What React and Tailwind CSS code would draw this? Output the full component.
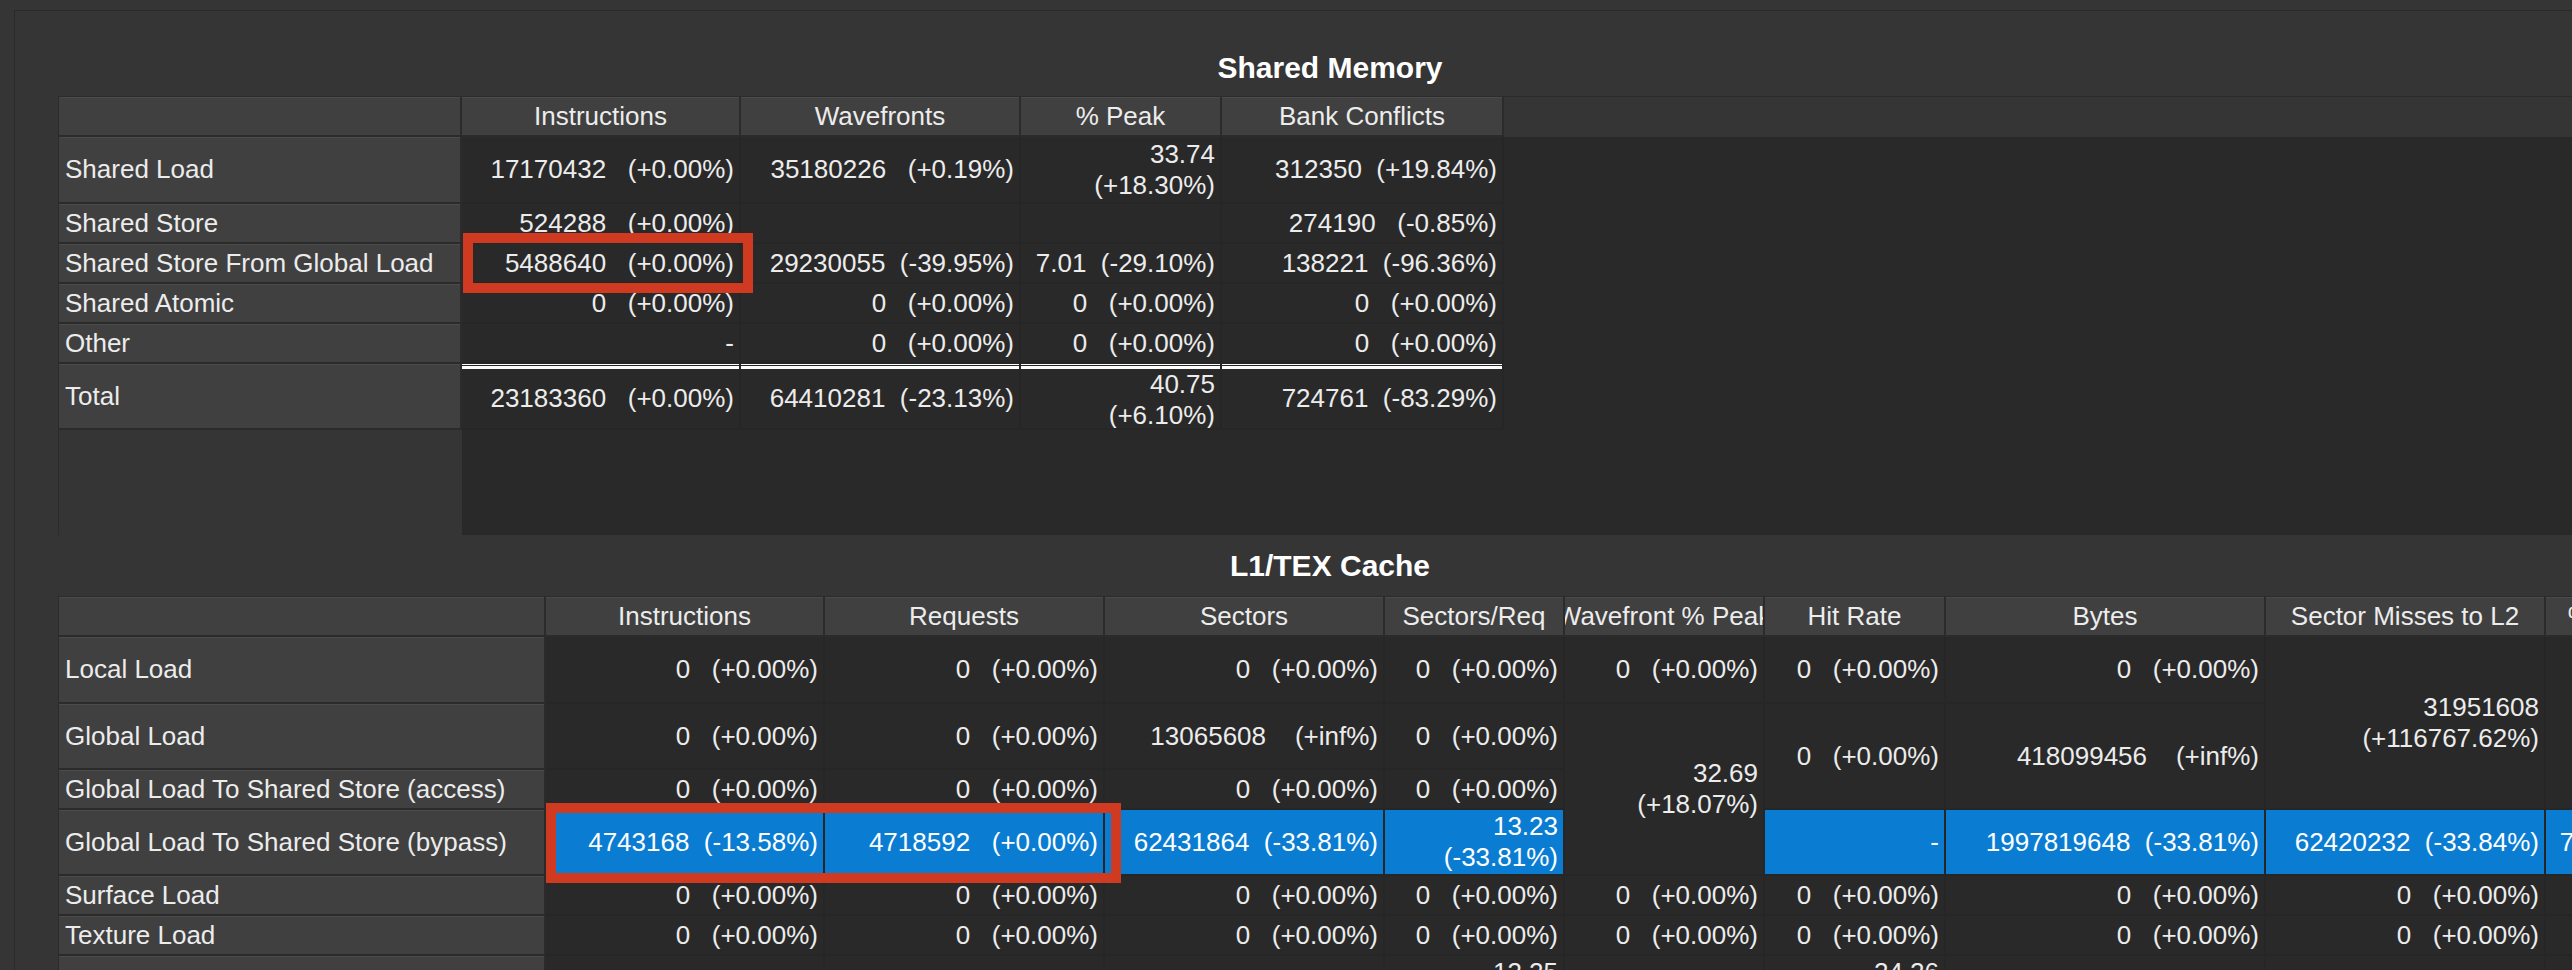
import React from 'react';

const v = (n, p) => `${n}  ${p.padStart(9, ' ')}`;
const z = v('0', '(+0.00%)');

function HCell({ children, cls = '', left = false }) {
  return (
    <div
      className={`shrink-0 flex items-center overflow-hidden whitespace-nowrap bg-[#404040] shadow-[inset_0_1px_0_#4b4b4b] border-r-2 border-b-2 border-[#2b2b2b] text-[#ececec] ${
        left ? 'justify-start pl-[6px]' : 'justify-center'
      } ${cls}`}
    >
      {children}
    </div>
  );
}

function DCell({ c, blue = false, total = false, span = '' }) {
  const lines = c == null ? [] : Array.isArray(c) ? c : [c];
  return (
    <div
      className={`flex flex-col min-w-0 overflow-hidden border-r-2 border-b-2 border-[#262626] ${
        blue ? 'bg-[#0a7dd3] text-white' : 'text-[#ececec]'
      } ${span}`}
    >
      {total && <div className="h-[5px] shrink-0 border-t border-b-[3px] border-white" />}
      <div className="flex-1 flex flex-col items-end justify-center pr-[5px] leading-[31px]">
        {lines.map((l, i) => (
          <span key={i} className="whitespace-pre">
            {l}
          </span>
        ))}
      </div>
    </div>
  );
}

const SHARED_COLS = [
  ['Instructions', 'w-[279px]'],
  ['Wavefronts', 'w-[280px]'],
  ['% Peak', 'w-[201px]'],
  ['Bank Conflicts', 'w-[282px]'],
];

const SHARED_ROWS = [
  ['Shared Load', 'h-[67px]', [v('17170432', '(+0.00%)'), v('35180226', '(+0.19%)'), ['33.74', '(+18.30%)'], v('312350', '(+19.84%)')]],
  ['Shared Store', 'h-[40px]', [v('524288', '(+0.00%)'), null, null, v('274190', '(-0.85%)')]],
  ['Shared Store From Global Load', 'h-[40px]', [v('5488640', '(+0.00%)'), v('29230055', '(-39.95%)'), v('7.01', '(-29.10%)'), v('138221', '(-96.36%)')]],
  ['Shared Atomic', 'h-[40px]', [z, z, z, z]],
  ['Other', 'h-[40px]', ['-', z, z, z]],
  ['Total', 'h-[66px]', [v('23183360', '(+0.00%)'), v('64410281', '(-23.13%)'), ['40.75', '(+6.10%)'], v('724761', '(-83.29%)')], true],
];

function SharedTable() {
  return (
    <div className="flex h-[439px] border-t border-l border-[#2b2b2b] overflow-hidden">
      <div className="w-[403px] shrink-0 flex flex-col">
        <HCell cls="h-[40px]" />
        {SHARED_ROWS.map(([label, h]) => (
          <HCell key={label} left cls={h}>
            {label}
          </HCell>
        ))}
      </div>
      <div className="flex-1 flex flex-col min-w-0">
        <div className="flex h-[40px] shrink-0">
          {SHARED_COLS.map(([t, w]) => (
            <HCell key={t} cls={w}>
              {t}
            </HCell>
          ))}
        </div>
        <div className="flex-1 bg-[#292929]">
          <div className="grid w-max grid-cols-[279px_280px_201px_282px] grid-rows-[67px_40px_40px_40px_40px_66px]">
            {SHARED_ROWS.map(([label, , cells, total]) =>
              cells.map((c, i) => <DCell key={label + i} c={c} total={!!total} />)
            )}
          </div>
        </div>
      </div>
    </div>
  );
}

const L1_COLS = [
  ['Instructions', 'w-[279px]'],
  ['Requests', 'w-[280px]'],
  ['Sectors', 'w-[280px]'],
  ['Sectors/Req', 'w-[180px]'],
  ['Wavefront % Peak', 'w-[200px]'],
  ['Hit Rate', 'w-[181px]'],
  ['Bytes', 'w-[320px]'],
  ['Sector Misses to L2', 'w-[280px]'],
  ['% Peak to L2', 'w-[200px]'],
];

const L1_LABELS = [
  ['Local Load', 'h-[67px]'],
  ['Global Load', 'h-[66px]'],
  ['Global Load To Shared Store (access)', 'h-[40px]'],
  ['Global Load To Shared Store (bypass)', 'h-[66px]'],
  ['Surface Load', 'h-[40px]'],
  ['Texture Load', 'h-[40px]'],
  ['', 'h-[66px]'],
];

const L1_CELLS = [
  // Local Load
  { c: z }, { c: z }, { c: z }, { c: z }, { c: z }, { c: z }, { c: z },
  { c: ['31951608', '(+116767.62%)'], span: 'row-span-3' },
  { c: z, span: 'row-span-3' },
  // Global Load
  { c: z }, { c: z }, { c: v('13065608', '(+inf%)') }, { c: z },
  { c: ['32.69', '(+18.07%)'], span: 'row-span-3' },
  { c: z, span: 'row-span-2' },
  { c: v('418099456', '(+inf%)'), span: 'row-span-2' },
  // access
  { c: z }, { c: z }, { c: z }, { c: z },
  // bypass
  { c: v('4743168', '(-13.58%)'), blue: true },
  { c: v('4718592', '(+0.00%)'), blue: true },
  { c: v('62431864', '(-33.81%)'), blue: true },
  { c: ['13.23', '(-33.81%)'], blue: true },
  { c: '-', blue: true },
  { c: v('1997819648', '(-33.81%)'), blue: true },
  { c: v('62420232', '(-33.84%)'), blue: true },
  { c: v('7.84', '(-33.84%)'), blue: true },
  // Surface Load
  { c: z }, { c: z }, { c: z }, { c: z }, { c: z }, { c: z }, { c: z }, { c: z }, { c: z },
  // Texture Load
  { c: z }, { c: z }, { c: z }, { c: z }, { c: z }, { c: z }, { c: z }, { c: z }, { c: z },
  // next row (mostly clipped)
  { c: null }, { c: null }, { c: null },
  { c: ['13.25', '(-33.81%)'] },
  { c: null },
  { c: ['24.26', '(+0.00%)'] },
  { c: null }, { c: null }, { c: null },
];

function L1Table() {
  return (
    <div className="flex h-[440px] border-t border-l border-[#2b2b2b] overflow-hidden">
      <div className="w-[487px] shrink-0 flex flex-col">
        <HCell cls="h-[40px]" />
        {L1_LABELS.map(([label, h], i) => (
          <HCell key={i} left cls={h}>
            {label}
          </HCell>
        ))}
      </div>
      <div className="flex-1 flex flex-col min-w-0">
        <div className="flex h-[40px] shrink-0">
          {L1_COLS.map(([t, w]) => (
            <HCell key={t} cls={w}>
              {t}
            </HCell>
          ))}
        </div>
        <div className="flex-1 bg-[#292929]">
          <div className="grid w-max grid-cols-[279px_280px_280px_180px_200px_181px_320px_280px_200px] grid-rows-[67px_66px_40px_66px_40px_40px_66px]">
            {L1_CELLS.map((cell, i) => (
              <DCell key={i} c={cell.c} blue={cell.blue} span={cell.span || ''} />
            ))}
          </div>
        </div>
      </div>
    </div>
  );
}

export default function App() {
  return (
    <div className="relative w-[2572px] h-[970px] overflow-hidden bg-[#353535] font-[family-name:Liberation_Sans,Arial,sans-serif] text-[26px] text-[#ececec]">
      <div className="ml-[14px] mt-[10px] w-[2700px] h-[1100px] border-t border-l border-[#2a2a2a]">
        <div className="ml-[43px] w-[2544px]">
          <div className="h-[85px] pt-[28px] flex items-center justify-center text-[30px] font-bold text-white">
            Shared Memory
          </div>
          <SharedTable />
          <div className="h-[61px] flex items-center justify-center text-[30px] font-bold text-white">
            L1/TEX Cache
          </div>
          <L1Table />
        </div>
      </div>
      <div className="absolute left-[463px] top-[233px] w-[290px] h-[60px] border-[10px] border-[#d03a20]" />
      <div className="absolute left-[546px] top-[803px] w-[575px] h-[80px] border-[10px] border-[#d03a20]" />
    </div>
  );
}
